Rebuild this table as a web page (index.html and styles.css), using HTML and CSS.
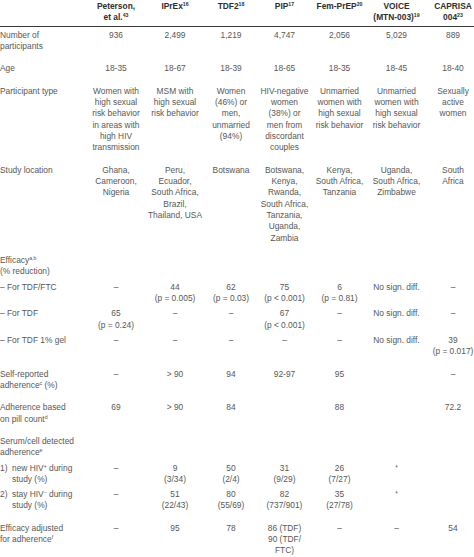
FILE: index.html
```html
<!DOCTYPE html>
<html>
<head>
<meta charset="utf-8">
<link rel="stylesheet" href="styles.css">
</head>
<body>
<table class="t">
  <colgroup>
    <col class="c-lbl"><col class="c-pet"><col class="c-ipr"><col class="c-tdf"><col class="c-pip"><col class="c-fem"><col class="c-voi"><col class="c-cap">
  </colgroup>
  <thead>
    <tr>
      <th class="lbl"></th>
      <th>Peterson,<br>et al.<sup>43</sup></th>
      <th>IPrEx<sup>16</sup></th>
      <th>TDF2<sup>18</sup></th>
      <th>PIP<sup>17</sup></th>
      <th>Fem-PrEP<sup>20</sup></th>
      <th>VOICE<br>(MTN-003)<sup>19</sup></th>
      <th>CAPRISA<br>004<sup>23</sup></th>
    </tr>
  </thead>
  <tbody>
    <tr class="major first">
      <td class="lbl">Number of<br>participants</td>
      <td>936</td><td>2,499</td><td>1,219</td><td>4,747</td><td>2,056</td><td>5,029</td><td>889</td>
    </tr>
    <tr class="major">
      <td class="lbl">Age</td>
      <td>18-35</td><td>18-67</td><td>18-39</td><td>18-65</td><td>18-35</td><td>18-45</td><td>18-40</td>
    </tr>
    <tr class="major">
      <td class="lbl">Participant type</td>
      <td>Women with<br>high sexual<br>risk behavior<br>in areas with<br>high HIV<br>transmission</td>
      <td>MSM with<br>high sexual<br>risk behavior</td>
      <td>Women<br>(46%) or<br>men,<br>unmarried<br>(94%)</td>
      <td>HIV-negative<br>women<br>(38%) or<br>men from<br>discordant<br>couples</td>
      <td>Unmarried<br>women with<br>high sexual<br>risk behavior</td>
      <td>Unmarried<br>women with<br>high sexual<br>risk behavior</td>
      <td>Sexually<br>active<br>women</td>
    </tr>
    <tr class="major">
      <td class="lbl">Study location</td>
      <td>Ghana,<br>Cameroon,<br>Nigeria</td>
      <td>Peru,<br>Ecuador,<br>South Africa,<br>Brazil,<br>Thailand, USA</td>
      <td>Botswana</td>
      <td>Botswana,<br>Kenya,<br>Rwanda,<br>South Africa,<br>Tanzania,<br>Uganda,<br>Zambia</td>
      <td>Kenya,<br>South Africa,<br>Tanzania</td>
      <td>Uganda,<br>South Africa,<br>Zimbabwe</td>
      <td>South<br>Africa</td>
    </tr>
    <tr class="major group">
      <td class="lbl">Efficacy<sup>a,b</sup><br>(% reduction)</td>
      <td></td><td></td><td></td><td></td><td></td><td></td><td></td>
    </tr>
    <tr class="sub">
      <td class="lbl">– For TDF/FTC</td>
      <td>–</td><td>44<br>(p = 0.005)</td><td>62<br>(p = 0.03)</td><td>75<br>(p &lt; 0.001)</td><td>6<br>(p = 0.81)</td><td>No sign. diff.</td><td>–</td>
    </tr>
    <tr class="sub">
      <td class="lbl">– For TDF</td>
      <td>65<br>(p = 0.24)</td><td>–</td><td>–</td><td>67<br>(p &lt; 0.001)</td><td>–</td><td>No sign. diff.</td><td>–</td>
    </tr>
    <tr class="sub">
      <td class="lbl">– For TDF 1% gel</td>
      <td>–</td><td>–</td><td>–</td><td>–</td><td>–</td><td>No sign. diff.</td><td>39<br>(p = 0.017)</td>
    </tr>
    <tr class="major">
      <td class="lbl">Self-reported<br>adherence<sup>c</sup> (%)</td>
      <td>–</td><td>&gt; 90</td><td>94</td><td>92-97</td><td>95</td><td></td><td>–</td>
    </tr>
    <tr class="major">
      <td class="lbl">Adherence based<br>on pill count<sup>d</sup></td>
      <td>69</td><td>&gt; 90</td><td>84</td><td></td><td>88</td><td></td><td>72.2</td>
    </tr>
    <tr class="major group">
      <td class="lbl">Serum/cell detected<br>adherence<sup>e</sup></td>
      <td></td><td></td><td></td><td></td><td></td><td></td><td></td>
    </tr>
    <tr class="sub">
      <td class="lbl hang"><span class="num">1)</span>new HIV<sup>+</sup> during<br>study (%)</td>
      <td>–</td><td>9<br>(3/34)</td><td>50<br>(2/4)</td><td>31<br>(9/29)</td><td>26<br>(7/27)</td><td><span class="ast">*</span></td><td></td>
    </tr>
    <tr class="sub">
      <td class="lbl hang"><span class="num">2)</span>stay HIV<sup>−</sup> during<br>study (%)</td>
      <td>–</td><td>51<br>(22/43)</td><td>80<br>(55/69)</td><td>82<br>(737/901)</td><td>35<br>(27/78)</td><td><span class="ast">*</span></td><td></td>
    </tr>
    <tr class="major">
      <td class="lbl">Efficacy adjusted<br>for adherence<sup>f</sup></td>
      <td>–</td><td>95</td><td>78</td><td>86 (TDF)<br>90 (TDF/<br>FTC)</td><td>–</td><td>–</td><td>54</td>
    </tr>
  </tbody>
</table>
</body>
</html>
```

FILE: styles.css
```css
html, body {
  margin: 0;
  padding: 0;
  background: #ffffff;
}

body {
  font-family: "Liberation Sans", Arial, Helvetica, sans-serif;
  font-size: 8.4px;
  color: #575757;
  overflow: hidden;
  width: 474px;
  height: 557px;
}

.t {
  border-collapse: collapse;
  table-layout: fixed;
  width: 481px;
}

.c-lbl { width: 86px; }
.c-pet { width: 60px; }
.c-ipr { width: 58px; }
.c-tdf { width: 54px; }
.c-pip { width: 53px; }
.c-fem { width: 57px; }
.c-voi { width: 57px; }
.c-cap { width: 56px; }

.t th,
.t td {
  padding: 0;
  text-align: center;
  vertical-align: top;
  line-height: 11.33px;
  white-space: nowrap;
}

.t thead th {
  font-weight: bold;
  color: #2e2e2e;
  padding-top: 0.5px;
  padding-bottom: 2.5px;
  border-bottom: 1.6px solid #3a3a3a;
}

.t td.lbl {
  text-align: left;
}

.t tr.major td {
  padding-top: 9px;
  padding-bottom: 2px;
}

.t tr.first td {
  padding-top: 3px;
}

.t tr.sub td {
  padding-top: 2px;
  padding-bottom: 2px;
}

.t td.hang {
  padding-left: 12px;
  text-indent: -12px;
}

.num {
  display: inline-block;
  width: 12px;
  text-indent: 0;
}

sup {
  font-size: 5.2px;
  line-height: 0;
  vertical-align: 3.2px;
}

.ast {
  font-size: 6.5px;
  position: relative;
  top: -1px;
}
```
